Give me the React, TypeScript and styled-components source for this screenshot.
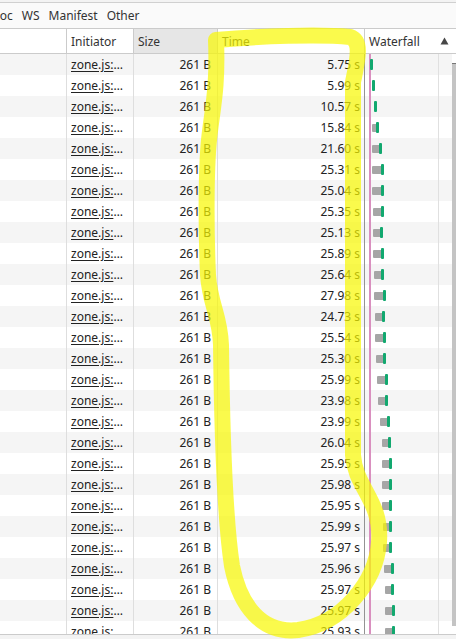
import React from 'react';
import styled, { createGlobalStyle } from 'styled-components';

const GlobalStyle = createGlobalStyle`
  html, body {
    margin: 0;
    padding: 0;
    background: #fff;
  }
  body {
    font-family: "Noto Sans", "DejaVu Sans", sans-serif;
    font-size: 12px;
    color: #303942;
  }
`;

// time, gray bar start, green bar start (page x)
const rows: [string, number | null, number][] = [
  ['5.75', null, 370],
  ['5.99', null, 372],
  ['10.57', null, 374],
  ['15.84', 372, 376],
  ['21.60', 372, 379],
  ['25.31', 372, 381],
  ['25.04', 372, 381],
  ['25.35', 373, 381],
  ['25.13', 373, 380],
  ['25.89', 373, 381],
  ['25.64', 374, 381],
  ['27.98', 374, 383],
  ['24.73', 375, 382],
  ['25.54', 375, 383],
  ['25.30', 376, 383],
  ['25.99', 377, 385],
  ['23.98', 378, 385],
  ['23.99', 380, 387],
  ['26.04', 382, 388],
  ['25.95', 382, 389],
  ['25.98', 382, 389],
  ['25.95', 382, 389],
  ['25.99', 383, 389],
  ['25.97', 383, 389],
  ['25.96', 384, 391],
  ['25.97', 385, 391],
  ['25.97', 385, 392],
  ['25.93', 385, 392],
];

const WATERFALL_X = 365;

const Page = styled.div`
  position: relative;
  width: 456px;
  height: 639px;
  overflow: hidden;
  background: #f3f3f3;
  padding-top: 2px;
  box-sizing: border-box;
  display: flex;
  flex-direction: column;
`;

const Toolbar = styled.div`
  height: 25px;
  flex: none;
  border-top: 1px solid #d0d0d0;
  background: #fafafa;
  display: flex;
  align-items: center;
  gap: 9px;
  color: #333;
  white-space: nowrap;
`;

const Filter = styled.span<{ $clip?: boolean }>`
  margin-left: ${({ $clip }) => ($clip ? '-9px' : '0')};
`;

const COLS = '66px 67px 84px 147px 88px';

const Header = styled.div`
  flex: none;
  display: grid;
  grid-template-columns: ${COLS} 4px;
  height: 26px;
  box-sizing: border-box;
  border-top: 1px solid #cbcbcb;
  border-bottom: 1px solid #cbcbcb;
  background: #fff;
  color: #333;
`;

const HeadCell = styled.div<{ $shade?: boolean; $first?: boolean }>`
  display: flex;
  align-items: center;
  justify-content: space-between;
  padding: 0 3px 0 4px;
  border-left: ${({ $first }) => ($first ? 'none' : '1px solid #cbcbcb')};
  background: ${({ $shade }) => ($shade ? '#e6e6e6' : '#fff')};
  white-space: nowrap;
  overflow: hidden;
`;

const SortArrow = styled.svg`
  flex: none;
  display: block;
  margin-bottom: 1px;
`;

const Body = styled.div`
  flex: 1;
  display: flex;
  overflow: hidden;
  background: #fff;
`;

const Rows = styled.div`
  width: 452px;
  flex: none;
`;

const Row = styled.div<{ $odd: boolean }>`
  display: grid;
  grid-template-columns: ${COLS};
  height: 21px;
  background: ${({ $odd }) => ($odd ? '#f5f5f5' : '#fff')};
`;

const Cell = styled.div<{ $right?: boolean; $pad?: number }>`
  display: flex;
  align-items: center;
  justify-content: ${({ $right }) => ($right ? 'flex-end' : 'flex-start')};
  padding: 0 ${({ $pad }) => $pad ?? 4}px 0 4px;
  border-left: 1px solid #dedede;
  white-space: nowrap;
  overflow: hidden;
  color: #222;
`;

const NameCell = styled.div``;

const Link = styled.span`
  text-decoration: underline;
  text-underline-offset: 2px;
`;

const WaterfallCell = styled.div`
  display: flex;
  align-items: center;
  border-left: 1px solid #939393;
  background-image: linear-gradient(
    to right,
    transparent 4px,
    #d98fbf 4px,
    #d98fbf 6px,
    transparent 6px,
    transparent 73px,
    #e0e0e0 73px,
    #e0e0e0 74px,
    transparent 74px
  );
`;

const Bars = styled.div`
  display: flex;
  align-items: center;
`;

const Waiting = styled.div`
  height: 8px;
  background: #a6a6a6;
  border-radius: 1px 0 0 1px;
`;

const Download = styled.div`
  width: 3px;
  height: 11px;
  background: #12a86f;
  border-radius: 1px;
`;

const Scrollbar = styled.div`
  width: 4px;
  flex: none;
  padding-top: 9px;
  padding-bottom: 8px;
  box-sizing: border-box;
  display: flex;
  flex-direction: column;
  background: #fff;
`;

const Thumb = styled.div`
  flex: 1;
  background: #c4c4c4;
  border-top: 1px solid #777;
`;

const StatusBar = styled.div`
  flex: none;
  height: 4px;
  border-top: 1px solid #cbcbcb;
  background: #f3f3f3;
`;

const Highlight = styled.svg`
  position: absolute;
  top: 0;
  left: 0;
  pointer-events: none;
`;

export default function App() {
  return (
    <>
      <GlobalStyle />
      <Page>
        <Toolbar>
          <Filter $clip>Doc</Filter>
          <Filter>WS</Filter>
          <Filter>Manifest</Filter>
          <Filter>Other</Filter>
        </Toolbar>

        <Header>
          <HeadCell $first />
          <HeadCell>Initiator</HeadCell>
          <HeadCell $shade>Size</HeadCell>
          <HeadCell>Time</HeadCell>
          <HeadCell>
            Waterfall
            <SortArrow width="9" height="8" viewBox="0 0 9 8">
              <path d="M4.5 0.5 L8.5 7.5 L0.5 7.5 Z" fill="#474747" />
            </SortArrow>
          </HeadCell>
          <div />
        </Header>

        <Body>
          <Rows>
            {rows.map(([time, grayX, greenX], i) => {
              const start = grayX ?? greenX;
              return (
                <Row key={i} $odd={i % 2 === 0}>
                  <NameCell />
                  <Cell>
                    <Link>zone.js:</Link>…
                  </Cell>
                  <Cell $right $pad={6}>
                    261 B
                  </Cell>
                  <Cell $right>{time} s</Cell>
                  <WaterfallCell>
                    <Bars style={{ paddingLeft: start - WATERFALL_X }}>
                      {grayX !== null && <Waiting style={{ width: greenX - grayX }} />}
                      <Download />
                    </Bars>
                  </WaterfallCell>
                </Row>
              );
            })}
          </Rows>
          <Scrollbar>
            <Thumb />
          </Scrollbar>
        </Body>

        <StatusBar />

        <Highlight width="456" height="639" viewBox="0 0 456 639">
          <path
            d="M 216 40 C 260 36, 320 34, 350 37 C 363 41, 357 62, 353 82 L 353 455 C 355 488, 382 500, 379 542 C 376 582, 342 624, 298 630 C 262 634, 240 606, 232 566 C 225 520, 222 430, 221 345 C 220 315, 210 305, 208 275 C 206 230, 206 170, 209 140 C 212 110, 218 90, 216 40"
            fill="none"
            stroke="#f8f800"
            strokeOpacity={0.7}
            strokeWidth={16}
            strokeLinecap="round"
            strokeLinejoin="round"
          />
        </Highlight>
      </Page>
    </>
  );
}
